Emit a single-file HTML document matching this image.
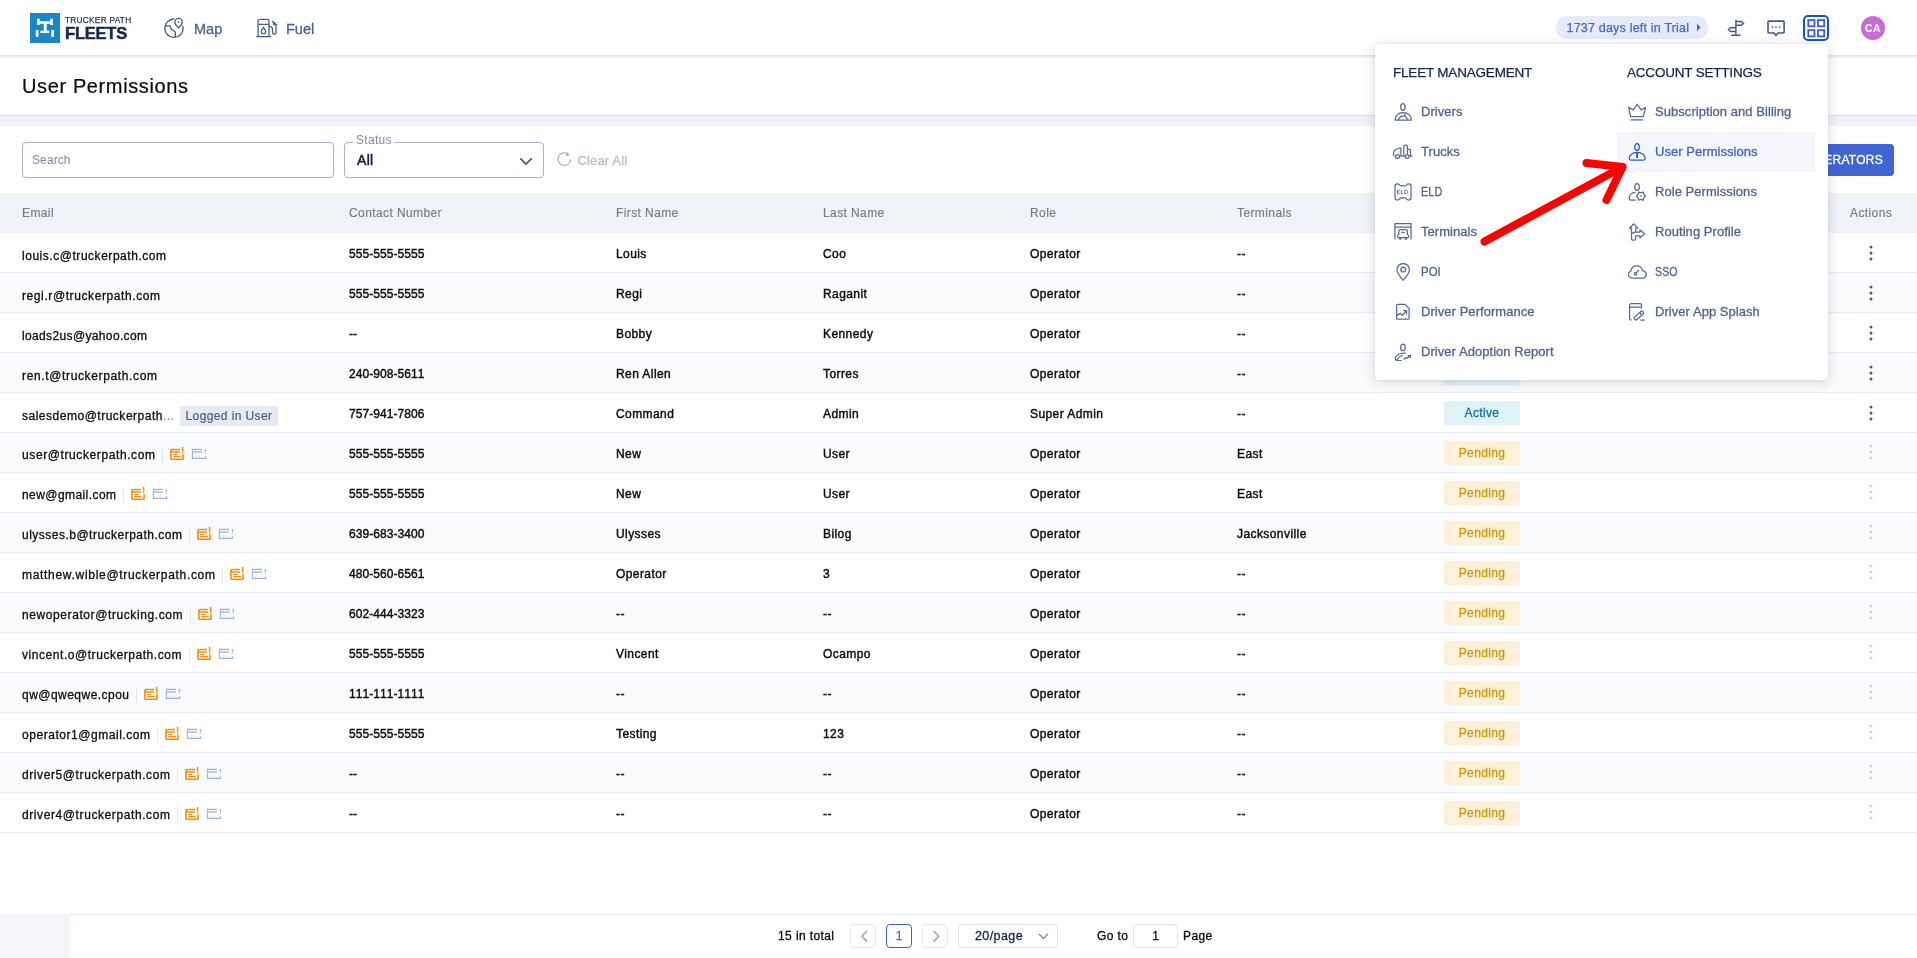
<!DOCTYPE html>
<html lang="en">
<head>
<meta charset="utf-8">
<title>User Permissions</title>
<style>
*{box-sizing:border-box;margin:0;padding:0}
html,body{width:1917px;height:958px;overflow:hidden;background:#fff}
body{will-change:transform;font-family:"Liberation Sans",sans-serif;font-size:12px;color:#111;position:relative}
.abs{position:absolute}
svg{display:block;overflow:visible}
/* header */
#hdr{position:absolute;left:0;top:0;width:1917px;height:56px;background:#fff;border-bottom:1px solid #e3e6ef;box-shadow:0 1px 2.5px rgba(0,0,0,.11)}
#logo{position:absolute;left:30px;top:13px;width:30px;height:30px;background:#1a87ca}
.tp{position:absolute;left:65px;top:16px;font-size:8.2px;line-height:10px;color:#1f3a63;letter-spacing:.33px;-webkit-text-stroke:.25px #1f3a63;white-space:nowrap}
.fl{position:absolute;left:65px;top:24px;font-size:16.5px;line-height:18px;font-weight:bold;color:#14294d;letter-spacing:-.2px;-webkit-text-stroke:.5px #14294d;white-space:nowrap}
.nav{position:absolute;top:20px;font-size:14.5px;line-height:18px;color:#4d5f8f;-webkit-text-stroke:.3px #4d5f8f;white-space:nowrap}
/* title */
#ttl{position:absolute;left:22px;top:73px;font-size:20px;line-height:26px;color:#0a0a0a;-webkit-text-stroke:.2px #0a0a0a;white-space:nowrap;letter-spacing:.62px}
#tline{position:absolute;left:0;top:115px;width:1917px;height:1px;background:#d9dde8}
#band{position:absolute;left:0;top:116px;width:1917px;height:10px;background:#f0f2f7}
/* filters */
#srch{position:absolute;left:22px;top:142px;width:312px;height:36px;border:1px solid #aab3ca;border-radius:4px;background:#fff}
#srch span{position:absolute;left:9px;top:10px;line-height:14px;font-size:12px;color:#7f88a0;letter-spacing:.1px}
#sel{position:absolute;left:344px;top:142px;width:200px;height:36px;border:1px solid #aab3ca;border-radius:4px;background:#fff}
#sel .lb{position:absolute;left:8px;top:-10px;padding:0 2px 0 3px;background:#fff;font-size:12px;line-height:14px;color:#7f88a0;letter-spacing:.3px}
#sel .v{position:absolute;left:12px;top:8px;font-size:14px;line-height:18px;color:#0f1b3d;-webkit-text-stroke:.45px #0f1b3d;letter-spacing:.3px}
#clr{position:absolute;left:577.5px;top:153px;font-size:13px;line-height:16px;color:#b9bfcd;-webkit-text-stroke:.35px #b9bfcd;letter-spacing:.15px;white-space:nowrap}
#btn{position:absolute;left:1760px;top:144px;width:134px;height:32px;border-radius:4px;background:#4064d2;color:#fff;font-size:12px;line-height:32px;text-align:right;padding-right:11px;-webkit-text-stroke:.3px #fff;letter-spacing:.25px;white-space:nowrap}
/* table */
#th{position:absolute;left:0;top:193px;width:1917px;height:40px;background:#f0f3f8}
#th span{position:absolute;top:13px;line-height:14px;font-size:12px;color:#757e96;-webkit-text-stroke:.2px #757e96;letter-spacing:.4px;white-space:nowrap}
.row{position:absolute;left:0;width:1917px;height:40px;border-bottom:1px solid #e8ebf3;background:#fff}
.row.alt{background:#fafbfd}
.c{position:absolute;top:14px;line-height:14px;font-size:12px;color:#0d0d0d;-webkit-text-stroke:.42px #0d0d0d;white-space:nowrap;letter-spacing:.42px}
.c.em{left:22px;top:16px;-webkit-text-stroke:.3px #0d0d0d;letter-spacing:.56px;overflow:visible}
.c.ph{letter-spacing:.07px;font-kerning:none}
.c.em.k1{top:15px}
.dv{position:absolute;top:15px;width:1px;height:15px;background:#e3e6ee}
.ic{position:absolute;top:14px}
.lg{position:absolute;left:180px;top:13px;width:98px;height:20px;border-radius:3px;background:#e6eaf5;color:#4f5a7b;-webkit-text-stroke:.2px #4f5a7b;font-size:12px;line-height:20px;text-align:center;letter-spacing:.4px;white-space:nowrap}
.bd{position:absolute;left:1444px;top:8px;width:76px;height:24px;border-radius:2px;font-size:12px;line-height:25px;text-align:center;letter-spacing:.35px}
.bd.ac{background:#e0f3f7;color:#0e6fa9;-webkit-text-stroke:.3px #0e6fa9}
.bd.pe{background:#fff0d9;color:#d6960c;-webkit-text-stroke:.3px #d6960c}
.dots{position:absolute;left:1868.9px;top:12px;color:#535a79}
.dots.lt{color:#d0d3de;top:11.4px;left:1868.5px}
/* footer */
#ft{position:absolute;left:0;top:914px;width:1917px;height:44px;background:#fff;border-top:1px solid #e3e6f5}
#ftg{position:absolute;left:0;top:914px;width:70px;height:44px;background:#f4f6fa}
.pt{position:absolute;top:929px;line-height:14px;font-size:12px;color:#0d0d0d;-webkit-text-stroke:.3px #0d0d0d;letter-spacing:.4px;white-space:nowrap}
.pb{position:absolute;top:924px;height:24px;border:1px solid #e4e7f0;border-radius:4px;background:#fff}
/* dropdown */
#dd{position:absolute;left:1374.5px;top:44px;width:453px;height:336px;background:#fff;border-radius:4px;box-shadow:0 2px 12px rgba(45,50,75,.2),0 0 1px rgba(45,50,75,.22)}
.dh{position:absolute;top:19.5px;font-size:13.5px;line-height:18px;color:#14244a;-webkit-text-stroke:.25px #14244a;letter-spacing:-.2px;white-space:nowrap}
.mi{position:absolute;height:40px;font-size:13px;line-height:41.4px;color:#50618f;-webkit-text-stroke:.28px #50618f;white-space:nowrap;letter-spacing:.05px}
.mi svg{position:absolute;left:-27px;top:12px;fill:none;stroke:currentColor;stroke-width:1.25;color:#586996}
.mi.on svg{color:#3157d0}
.sx{display:inline-block;transform-origin:0 50%}
.mi.on{color:#3f62d3;-webkit-text-stroke:.3px #3f62d3}
#hl{position:absolute;left:242.5px;top:88px;width:198px;height:39.5px;background:#f4f6fb}
</style>
</head>
<body>
<svg width="0" height="0" style="position:absolute">
<defs>
<symbol id="i-or" viewBox="0 0 15 14"><path d="M10 2.5H1.7A.8 .8 0 0 0 .9 3.3V11.4A.8 .8 0 0 0 1.7 12.2H12.3A.8 .8 0 0 0 13.1 11.4V7.3M.9 5H10" fill="none" stroke="#fb8a0c" stroke-width="1.6"/><path d="M3.1 7.5H7.3M3.1 9.5H10.8" fill="none" stroke="#fb8a0c" stroke-width="1.1"/><path d="M12.6 .5V3.9" stroke="#fb8a0c" stroke-width="1.5" stroke-linecap="round" fill="none"/><circle cx="12.6" cy="5.5" r=".7" fill="#fb8a0c"/></symbol>
<symbol id="i-bl" viewBox="0 0 16 14"><path d="M10.9 2.4H1.4V11.4H14.6V9.2" fill="none" stroke="#9db0d8" stroke-width="1.1"/><path d="M1.4 5H10.9" stroke="#b0c0e1" stroke-width="1.6" fill="none"/><path d="M4.4 9.1H5.6M7.8 9.1H9" stroke="#c5d0ea" stroke-width="1.2" fill="none"/><path d="M14.4 2V5M14.4 6.1V6.8" stroke="#9db0d8" stroke-width="1.2" fill="none"/></symbol>

<symbol id="m-drv" viewBox="0 0 18 18"><ellipse cx="8.9" cy="4" rx="2.2" ry="3.3"/><path d="M1.3 17.2C1 13 4 9.7 9.2 9.7C14.5 9.7 17.6 13 17.2 17.2Z"/><path d="M4.2 17C5.5 13.8 8.3 12.9 10 12.9C11 12.7 11.4 11.2 11.3 10.2M13.9 17C12.8 14.6 11.5 13.4 10 12.9"/></symbol>
<symbol id="m-trk" viewBox="0 0 20 18"><path d="M.6 12.8V9.5C.6 7.5 4 5.1 6.5 5.1H7.9V13M1.5 13.1H19.5M10.8 13V3.2A1 1 0 0 1 11.8 2.2H13.4A1 1 0 0 1 14.4 3.2V13M14.4 6.3H16.5A1 1 0 0 1 17.5 7.3V13"/><circle cx="4.5" cy="13.4" r="1.9" fill="#fff"/><circle cx="14.2" cy="13.4" r="1.9" fill="#fff"/></symbol>
<symbol id="m-eld" viewBox="0 0 18 18"><path d="M1 3.2C1 1.7 2 .8 3.3 .8C4.6 .8 5.2 1.4 5.6 2C6 2.6 6.4 2.9 7.2 2.9H10.8C11.6 2.9 12 2.6 12.4 2C12.8 1.4 13.4 .8 14.7 .8C16 .8 17 1.7 17 3.2V14.6C17 16.1 16 17 14.7 17C13.4 17 12.8 16.4 12.4 15.8C12 15.2 11.6 14.9 10.8 14.9H7.200000000000001C6.4 14.9 6 15.2 5.6 15.8C5.2 16.4 4.6 17 3.3 17C2 17 1 16.1 1 14.6Z"/><path d="M5.6 7.2H3.6V10.6H5.6M3.6 8.9H5.2M7.3 7V10.6H9.1M10.7 7.2V10.6H11.6C12.9 10.6 13.6 9.9 13.6 8.9C13.6 7.9 12.9 7.2 11.6 7.2Z" stroke-width=".9"/></symbol>
<symbol id="m-ter" viewBox="0 0 18 18"><path d="M.9 16.6V.7H17V16.6M.9 4H17M4.8 11.5V8.2A1.5 1.5 0 0 1 6.3 6.7H11.9A1.5 1.5 0 0 1 13.4 8.2V11.5C14.2 11.6 14.6 12.2 14.6 13V13.5A1 1 0 0 1 13.6 14.5H4.6A1 1 0 0 1 3.6 13.5V13C3.600000000000001 12.2 4 11.6 4.8 11.5ZM7.3 9.4H10.8"/><path d="M5.2 15.9H7.4M10.8 15.9H13" stroke-width="1.7"/></symbol>
<symbol id="m-poi" viewBox="0 0 18 18"><path d="M9.2 17.2C6 13.5 3 10.5 3 6.7A6.2 6.2 0 0 1 15.4 6.7C15.4 10.5 12.4 13.5 9.2 17.2Z"/><circle cx="9.2" cy="6.6" r="2.4"/></symbol>
<symbol id="m-prf" viewBox="0 0 18 18"><path d="M2.6 2.6A1.3 1.3 0 0 1 3.9 1.3H10.8L15.1 5.4V14.9A1.3 1.3 0 0 1 13.8 16.2H3.9A1.3 1.3 0 0 1 2.6 14.9ZM2.6 12.6L6.2 10.4L8.3 12.4L12.3 7.8M9.3 7.6H12.5V11.5"/></symbol>
<symbol id="m-adp" viewBox="0 0 18 18"><ellipse cx="9" cy="4.4" rx="2.3" ry="3.3"/><path d="M11.7 10.2C6 9.6 1.2 12.5 1.2 15.8C1.2 17.2 2.5 17.5 4 17.5H7.7M3.2 17C4 14.5 6 12.8 9 12.5M9.6 16.6L12.2 14.4L13.2 15.2L16.2 12.9M13.6 12.5H16.4V15"/></symbol>
<symbol id="m-sub" viewBox="0 0 18 18"><path d="M.6 4.4L5.2 6.9L9.2 1.3L13.2 6.9L17.7 4.4L15.1 13.6H2.6ZM2.6 16.8H15.3"/></symbol>
<symbol id="m-usr" viewBox="0 0 18 18"><ellipse cx="9" cy="3.9" rx="2.3" ry="3.4"/><path d="M1.2 15.5C1.2 12 4.5 9.4 9.2 9.4C14 9.4 17.2 12 17.2 15.5C17.2 16.5 16.5 17 15.5 17H3C2 17 1.2 16.5 1.2 15.5Z"/><path d="M9.1 9.8V14.3" stroke-width="1.9" stroke-linecap="round"/></symbol>
<symbol id="m-rol" viewBox="0 0 18 18"><ellipse cx="9" cy="3.9" rx="2.3" ry="3.4"/><path d="M7.4 9.4C3.5 9.6 1.2 12.2 1.2 15.3C1.2 16.6 2 17.2 3.2 17.2H7.7"/><path d="M17.70 13.10L15.86 14.75L15.35 17.17L13.00 16.40L10.65 17.17L10.14 14.75L8.30 13.10L10.14 11.45L10.65 9.03L13.00 9.80L15.35 9.03L15.86 11.45Z" stroke-linejoin="round"/><circle cx="13" cy="13.1" r=".8" fill="currentColor" stroke="none"/></symbol>
<symbol id="m-rte" viewBox="0 0 18 18"><path d="M5.8 .8L1.5 5.2H3.5V15.7A1.5 1.5 0 0 0 5 17.2H6.2A1.5 1.5 0 0 0 7.7 15.7V12.8H12V14.9L16.6 10.8L12 6.9V9H7.7V5.2H9.7ZM3.6 11C4.5 9.3 6 9 7.7 9" stroke-linejoin="round"/></symbol>
<symbol id="m-sso" viewBox="0 0 19 18"><path d="M4.500000000000001 15C2 15 .3 13.6 .3 11.8C.3 10 1.4 8.9 2.8 8.3C3.2 5.2 5.5 2.9 8.6 2.9C11.6 2.9 13.8 4.8 14.5 7.6C16.6 8 18.2 9.5 18.2 11.6C18.2 13.6 16.6 15 14.8 15Z"/><circle cx="7.5" cy="10.7" r="1.3"/><path d="M8.5 9.7L10.9 7"/></symbol>
<symbol id="m-spl" viewBox="0 0 18 18"><path d="M3.7 16.9H3.1A1.5 1.5 0 0 1 1.6 15.4V2.2A1.5 1.5 0 0 1 3.1 .7H12A1.5 1.5 0 0 1 13.5 2.2V5.4M1.6 4H13.5M12.3 17H16.8"/><g transform="translate(10.8 12.6) rotate(-41)"><rect x="-5.6" y="-1.7" width="11.2" height="3.4" rx="1.7"/><path d="M2.6 -1.7V1.7"/></g></symbol>
<symbol id="i-dt" viewBox="0 0 4 16"><circle cx="2" cy="2" r="1.5"/><circle cx="2" cy="8" r="1.5"/><circle cx="2" cy="14" r="1.5"/></symbol>
</defs>
</svg>

<!-- table -->
<div id="th"><span style="left:22px">Email</span><span style="left:349px">Contact Number</span><span style="left:616px">First Name</span><span style="left:823px">Last Name</span><span style="left:1030px">Role</span><span style="left:1237px">Terminals</span><span style="left:1444px">Status</span><span style="left:1850px">Actions</span></div>
<div class="row" style="top:233px"><span class="c em" style="width:144px;letter-spacing:0.535px">louis.c@truckerpath.com</span><span class="c ph" style="left:349px">555-555-5555</span><span class="c" style="left:616px">Louis</span><span class="c" style="left:823px">Coo</span><span class="c" style="left:1030px">Operator</span><span class="c" style="left:1237px">--</span><span class="bd ac">Active</span><svg class="dots" width="4" height="16" fill="currentColor"><use href="#i-dt"/></svg></div>
<div class="row alt" style="top:273px"><span class="c em" style="width:138px;letter-spacing:0.592px">regi.r@truckerpath.com</span><span class="c ph" style="left:349px">555-555-5555</span><span class="c" style="left:616px">Regi</span><span class="c" style="left:823px">Raganit</span><span class="c" style="left:1030px">Operator</span><span class="c" style="left:1237px">--</span><span class="bd ac">Active</span><svg class="dots" width="4" height="16" fill="currentColor"><use href="#i-dt"/></svg></div>
<div class="row" style="top:313px"><span class="c em" style="width:125px;letter-spacing:0.358px">loads2us@yahoo.com</span><span class="c ph" style="left:349px">--</span><span class="c" style="left:616px">Bobby</span><span class="c" style="left:823px">Kennedy</span><span class="c" style="left:1030px">Operator</span><span class="c" style="left:1237px">--</span><span class="bd ac">Active</span><svg class="dots" width="4" height="16" fill="currentColor"><use href="#i-dt"/></svg></div>
<div class="row alt" style="top:353px"><span class="c em" style="width:135px;letter-spacing:0.638px">ren.t@truckerpath.com</span><span class="c ph" style="left:349px">240-908-5611</span><span class="c" style="left:616px">Ren Allen</span><span class="c" style="left:823px">Torres</span><span class="c" style="left:1030px">Operator</span><span class="c" style="left:1237px">--</span><span class="bd ac">Active</span><svg class="dots" width="4" height="16" fill="currentColor"><use href="#i-dt"/></svg></div>
<div class="row" style="top:393px"><span class="c em" style="width:152px;letter-spacing:0.511px">salesdemo@truckerpath<span style="color:#777;-webkit-text-stroke:0">...</span></span><span class="lg">Logged in User</span><span class="c ph" style="left:349px">757-941-7806</span><span class="c" style="left:616px">Command</span><span class="c" style="left:823px">Admin</span><span class="c" style="left:1030px">Super Admin</span><span class="c" style="left:1237px">--</span><span class="bd ac">Active</span><svg class="dots" width="4" height="16" fill="currentColor"><use href="#i-dt"/></svg></div>
<div class="row alt" style="top:433px"><span class="c em k1" style="width:133px;letter-spacing:0.602px">user@truckerpath.com</span><i class="dv" style="left:162px"></i><svg class="ic" style="left:170px" width="15" height="14"><use href="#i-or"/></svg><svg class="ic" style="left:191px" width="16" height="14"><use href="#i-bl"/></svg><span class="c ph" style="left:349px">555-555-5555</span><span class="c" style="left:616px">New</span><span class="c" style="left:823px">User</span><span class="c" style="left:1030px">Operator</span><span class="c" style="left:1237px">East</span><span class="bd pe">Pending</span><svg class="dots lt" width="4" height="16" fill="currentColor"><use href="#i-dt"/></svg></div>
<div class="row" style="top:473px"><span class="c em k1" style="width:94px;letter-spacing:0.427px">new@gmail.com</span><i class="dv" style="left:123px"></i><svg class="ic" style="left:131px" width="15" height="14"><use href="#i-or"/></svg><svg class="ic" style="left:152px" width="16" height="14"><use href="#i-bl"/></svg><span class="c ph" style="left:349px">555-555-5555</span><span class="c" style="left:616px">New</span><span class="c" style="left:823px">User</span><span class="c" style="left:1030px">Operator</span><span class="c" style="left:1237px">East</span><span class="bd pe">Pending</span><svg class="dots lt" width="4" height="16" fill="currentColor"><use href="#i-dt"/></svg></div>
<div class="row alt" style="top:513px"><span class="c em k1" style="width:160px;letter-spacing:0.49px">ulysses.b@truckerpath.com</span><i class="dv" style="left:189px"></i><svg class="ic" style="left:197px" width="15" height="14"><use href="#i-or"/></svg><svg class="ic" style="left:218px" width="16" height="14"><use href="#i-bl"/></svg><span class="c ph" style="left:349px">639-683-3400</span><span class="c" style="left:616px">Ulysses</span><span class="c" style="left:823px">Bilog</span><span class="c" style="left:1030px">Operator</span><span class="c" style="left:1237px">Jacksonville</span><span class="bd pe">Pending</span><svg class="dots lt" width="4" height="16" fill="currentColor"><use href="#i-dt"/></svg></div>
<div class="row" style="top:553px"><span class="c em k1" style="width:193px;letter-spacing:0.693px">matthew.wible@truckerpath.com</span><i class="dv" style="left:222px"></i><svg class="ic" style="left:230px" width="15" height="14"><use href="#i-or"/></svg><svg class="ic" style="left:251px" width="16" height="14"><use href="#i-bl"/></svg><span class="c ph" style="left:349px">480-560-6561</span><span class="c" style="left:616px">Operator</span><span class="c" style="left:823px">3</span><span class="c" style="left:1030px">Operator</span><span class="c" style="left:1237px">--</span><span class="bd pe">Pending</span><svg class="dots lt" width="4" height="16" fill="currentColor"><use href="#i-dt"/></svg></div>
<div class="row alt" style="top:593px"><span class="c em k1" style="width:160.5px;letter-spacing:0.59px">newoperator@trucking.com</span><i class="dv" style="left:189.5px"></i><svg class="ic" style="left:197.5px" width="15" height="14"><use href="#i-or"/></svg><svg class="ic" style="left:218.5px" width="16" height="14"><use href="#i-bl"/></svg><span class="c ph" style="left:349px">602-444-3323</span><span class="c" style="left:616px">--</span><span class="c" style="left:823px">--</span><span class="c" style="left:1030px">Operator</span><span class="c" style="left:1237px">--</span><span class="bd pe">Pending</span><svg class="dots lt" width="4" height="16" fill="currentColor"><use href="#i-dt"/></svg></div>
<div class="row" style="top:633px"><span class="c em k1" style="width:159.5px;letter-spacing:0.552px">vincent.o@truckerpath.com</span><i class="dv" style="left:188.5px"></i><svg class="ic" style="left:196.5px" width="15" height="14"><use href="#i-or"/></svg><svg class="ic" style="left:217.5px" width="16" height="14"><use href="#i-bl"/></svg><span class="c ph" style="left:349px">555-555-5555</span><span class="c" style="left:616px">Vincent</span><span class="c" style="left:823px">Ocampo</span><span class="c" style="left:1030px">Operator</span><span class="c" style="left:1237px">--</span><span class="bd pe">Pending</span><svg class="dots lt" width="4" height="16" fill="currentColor"><use href="#i-dt"/></svg></div>
<div class="row alt" style="top:673px"><span class="c em k1" style="width:107px;letter-spacing:0.469px">qw@qweqwe.cpou</span><i class="dv" style="left:136px"></i><svg class="ic" style="left:144px" width="15" height="14"><use href="#i-or"/></svg><svg class="ic" style="left:165px" width="16" height="14"><use href="#i-bl"/></svg><span class="c ph" style="left:349px">111-111-1111</span><span class="c" style="left:616px">--</span><span class="c" style="left:823px">--</span><span class="c" style="left:1030px">Operator</span><span class="c" style="left:1237px">--</span><span class="bd pe">Pending</span><svg class="dots lt" width="4" height="16" fill="currentColor"><use href="#i-dt"/></svg></div>
<div class="row" style="top:713px"><span class="c em k1" style="width:128px;letter-spacing:0.543px">operator1@gmail.com</span><i class="dv" style="left:157px"></i><svg class="ic" style="left:165px" width="15" height="14"><use href="#i-or"/></svg><svg class="ic" style="left:186px" width="16" height="14"><use href="#i-bl"/></svg><span class="c ph" style="left:349px">555-555-5555</span><span class="c" style="left:616px">Testing</span><span class="c" style="left:823px">123</span><span class="c" style="left:1030px">Operator</span><span class="c" style="left:1237px">--</span><span class="bd pe">Pending</span><svg class="dots lt" width="4" height="16" fill="currentColor"><use href="#i-dt"/></svg></div>
<div class="row alt" style="top:753px"><span class="c em k1" style="width:148px;letter-spacing:0.595px">driver5@truckerpath.com</span><i class="dv" style="left:177px"></i><svg class="ic" style="left:185px" width="15" height="14"><use href="#i-or"/></svg><svg class="ic" style="left:206px" width="16" height="14"><use href="#i-bl"/></svg><span class="c ph" style="left:349px">--</span><span class="c" style="left:616px">--</span><span class="c" style="left:823px">--</span><span class="c" style="left:1030px">Operator</span><span class="c" style="left:1237px">--</span><span class="bd pe">Pending</span><svg class="dots lt" width="4" height="16" fill="currentColor"><use href="#i-dt"/></svg></div>
<div class="row" style="top:793px"><span class="c em k1" style="width:148px;letter-spacing:0.595px">driver4@truckerpath.com</span><i class="dv" style="left:177px"></i><svg class="ic" style="left:185px" width="15" height="14"><use href="#i-or"/></svg><svg class="ic" style="left:206px" width="16" height="14"><use href="#i-bl"/></svg><span class="c ph" style="left:349px">--</span><span class="c" style="left:616px">--</span><span class="c" style="left:823px">--</span><span class="c" style="left:1030px">Operator</span><span class="c" style="left:1237px">--</span><span class="bd pe">Pending</span><svg class="dots lt" width="4" height="16" fill="currentColor"><use href="#i-dt"/></svg></div>

<!-- title + filters -->
<div id="ttl">User Permissions</div>
<div id="tline"></div><div id="band"></div>
<div id="srch"><span>Search</span></div>
<div id="sel"><span class="lb">Status</span><span class="v">All</span>
<svg class="abs" style="left:174px;top:14px" width="14" height="9"><path d="M1.3 1.3L7 7L12.7 1.3" fill="none" stroke="#4a5573" stroke-width="1.7"/></svg></div>
<svg class="abs" style="left:556px;top:151px" width="17" height="17"><path d="M12.9 3.9A6.3 6.3 0 1 0 14.6 8.2" fill="none" stroke="#b4bac9" stroke-width="1.4"/><path d="M10.9 .7L13.8 4.4L9.6 5.3Z" fill="#b4bac9"/></svg>
<div id="clr">Clear All</div>
<div id="btn">ADD OPERATORS</div>

<!-- footer -->
<div id="ft"></div><div id="ftg"></div>
<span class="pt" style="left:778px">15 in total</span>
<div class="pb" style="left:850px;width:26px"><svg class="abs" style="left:8.5px;top:5px" width="9" height="13"><path d="M7 .8L1.9 6.2L7 11.6" fill="none" stroke="#a9afc0" stroke-width="1.9"/></svg></div>
<div class="pb" style="left:886px;width:26px;border:1.5px solid #3f62d3;color:#4a6cd4;-webkit-text-stroke:.3px #4a6cd4;text-align:center;line-height:22px;font-size:12px">1</div>
<div class="pb" style="left:922px;width:26px"><svg class="abs" style="left:8.5px;top:5px" width="9" height="13"><path d="M1.6 .8L6.7 6.2L1.6 11.6" fill="none" stroke="#a9afc0" stroke-width="1.9"/></svg></div>
<div class="pb" style="left:958px;width:100px;border-color:#dfe3ee"><span class="abs" style="left:16px;top:4px;line-height:14px;font-size:12.5px;color:#14204a;-webkit-text-stroke:.3px #14204a;letter-spacing:.4px">20/page</span><svg class="abs" style="left:79px;top:8px" width="11" height="7"><path d="M1 1L5.5 5.5L10 1" fill="none" stroke="#7d869e" stroke-width="1.4"/></svg></div>
<span class="pt" style="left:1097px">Go to</span>
<div class="pb" style="left:1133px;width:45px;border-color:#dfe3ee;text-align:center;line-height:23px;font-size:12px;color:#0d0d0d;-webkit-text-stroke:.3px #0d0d0d">1</div>
<span class="pt" style="left:1183px">Page</span>

<!-- header -->
<div id="hdr">
<div id="logo"><svg width="30" height="30"><path d="M7.1 5.75h2.7v2.5h10.4v-2.5h2.7v6.25h-2.7v-1.25h-3.5v7.05h2.5v2.2h-8.8v-2.2h3.35v-7.05h-3.95v1.25h-2.7ZM5.8 17h2.7v7.1h-2.7ZM21.3 17h2.7v7.1h-2.7Z" fill="#fff"/></svg></div>
<div class="tp">TRUCKER PATH</div><div class="fl">FLEETS</div>

<svg class="abs" style="left:164px;top:18px" width="20" height="20" fill="none" stroke="#43568a" stroke-width="1.3"><circle cx="10" cy="10.2" r="9.2"/><path d="M1.2 7.8H6.2C6.2 10 7 11.2 8.5 12C10.5 13 11.5 13.2 11.4 15V19.2"/><path d="M14.5 9.9C12 7.5 10.8 5.8 10.8 4A3.7 3.7 0 0 1 18.2 4C18.2 5.8 17 7.5 14.5 9.9Z" fill="#fff" stroke="#fff" stroke-width="3.2"/><path d="M14.5 9.9C12 7.5 10.8 5.8 10.8 4A3.7 3.7 0 0 1 18.2 4C18.2 5.8 17 7.5 14.5 9.9Z" fill="#fff"/><circle cx="14.5" cy="4.1" r=".9" fill="#43568a" stroke="none"/></svg>
<svg class="abs" style="left:256px;top:18px" width="21" height="20" fill="none" stroke="#4a5d8c" stroke-width="1.3"><path d="M2.1 18.7V2.9A1.5 1.5 0 0 1 3.6 1.4H11.5A1.5 1.5 0 0 1 13 2.900000000000001V18.7M2.1 6.4H13M.1 18.7H15M7.5 9.4C8.6 11 9.7 12.2 9.7 13.5A2.2 2.2 0 0 1 5.3 13.5C5.3 12.2 6.4 11 7.5 9.4ZM13 8.5C15 8 16.5 9.5 16.5 11.5V14.5A1.75 1.75 0 0 0 20 14.5V6.5L16.3 3.3"/><path d="M17.3 4.2L20 6.5L17.8 6.6Z" fill="#4a5d8c"/></svg>
<div class="abs" style="left:1556px;top:16px;width:152px;height:23px;border-radius:12px;background:#e6ebfa"></div>
<div class="abs" id="trial" style="left:1566.5px;top:20px;font-size:12.5px;line-height:16px;color:#4565d4;-webkit-text-stroke:.25px #4565d4;letter-spacing:.2px;white-space:nowrap">1737 days left in Trial</div>
<svg class="abs" style="left:1696px;top:23px" width="6" height="9"><path d="M1 .8L4.6 4.5L1 8.2Z" fill="#4565d4"/></svg>
<svg class="abs" style="left:1727px;top:19px" width="18" height="18" fill="none" stroke="#45568a" stroke-width="1.4"><path d="M8.9 1V16.2M8.9 2.5H14.4L16.5 4.5L14.4 6.3H8.9M8.9 8.7H3.4L1.4 10.6L3.4 12.5H8.9M4.3 16.2H13.6"/></svg>
<svg class="abs" style="left:1767px;top:19px" width="18" height="18" fill="none" stroke="#45568a" stroke-width="1.6"><path d="M2 2.1H16.1A1 1 0 0 1 17.1 3.1V13A1 1 0 0 1 16.1 14H11L9 16.3L7 14H2A1 1 0 0 1 1 13V3.1A1 1 0 0 1 2 2.1Z"/><g fill="#45568a" stroke="none"><circle cx="5.3" cy="8.1" r=".9"/><circle cx="9" cy="8.1" r=".9"/><circle cx="12.7" cy="8.1" r=".9"/></g></svg>
<div class="abs" style="left:1803px;top:15px;width:26px;height:26px;border:2px solid #0d55c8;border-radius:5px"></div>
<svg class="abs" style="left:1807px;top:19px" width="18" height="18" fill="none" stroke="#3b5bcf" stroke-width="1.8"><rect x="1.3" y="1.1" width="6.2" height="6.2"/><rect x="11" y="1.1" width="6.2" height="6.2"/><rect x="1.3" y="11.2" width="6.2" height="6.2"/><rect x="11" y="11.2" width="6.2" height="6.2"/></svg>
<div class="abs" style="left:1861px;top:16px;width:24px;height:24px;border-radius:50%;background:#c86dd8;color:#fff;font-size:10.5px;font-weight:bold;line-height:24px;text-align:center;letter-spacing:.3px">CA</div>
<div class="nav" style="left:194px">Map</div>
<div class="nav" style="left:286px">Fuel</div>
</div>

<!-- dropdown -->
<div id="dd">
<div id="hl"></div>
<div class="dh" style="left:18.5px">FLEET MANAGEMENT</div>
<div class="dh" style="left:252.5px">ACCOUNT SETTINGS</div>
<div class="mi" style="left:46.5px;top:47px"><svg class="mic" width="18" height="18"><use href="#m-drv"/></svg>Drivers</div>
<div class="mi" style="left:46.5px;top:87px"><svg class="mic" width="20" height="18" style="left:-28px"><use href="#m-trk"/></svg>Trucks</div>
<div class="mi" style="left:46.5px;top:127px"><svg class="mic" width="18" height="18"><use href="#m-eld"/></svg><span class="sx" style="transform:scaleX(.84)">ELD</span></div>
<div class="mi" style="left:46.5px;top:167px"><svg class="mic" width="18" height="18"><use href="#m-ter"/></svg>Terminals</div>
<div class="mi" style="left:46.5px;top:207px"><svg class="mic" width="18" height="18"><use href="#m-poi"/></svg><span class="sx" style="transform:scaleX(.88)">POI</span></div>
<div class="mi" style="left:46.5px;top:247px"><svg class="mic" width="18" height="18"><use href="#m-prf"/></svg>Driver Performance</div>
<div class="mi" style="left:46.5px;top:287px"><svg class="mic" width="18" height="18"><use href="#m-adp"/></svg>Driver Adoption Report</div>
<div class="mi" style="left:280.5px;top:47px"><svg class="mic" width="18" height="18"><use href="#m-sub"/></svg>Subscription and Billing</div>
<div class="mi on" style="left:280.5px;top:87px"><svg class="mic" width="18" height="18"><use href="#m-usr"/></svg>User Permissions</div>
<div class="mi" style="left:280.5px;top:127px"><svg class="mic" width="18" height="18"><use href="#m-rol"/></svg>Role Permissions</div>
<div class="mi" style="left:280.5px;top:167px"><svg class="mic" width="18" height="18"><use href="#m-rte"/></svg>Routing Profile</div>
<div class="mi" style="left:280.5px;top:207px"><svg class="mic" width="19" height="18"><use href="#m-sso"/></svg><span class="sx" style="transform:scaleX(.82)">SSO</span></div>
<div class="mi" style="left:280.5px;top:247px"><svg class="mic" width="18" height="18"><use href="#m-spl"/></svg>Driver App Splash</div>
</div>

<!-- arrow -->
<svg class="abs" style="left:0;top:0" width="1917" height="958"><path d="M1484.5 241.5L1622.5 167M1586.5 163L1622.5 167L1606.5 200" fill="none" stroke="#fe0000" stroke-width="8" stroke-linecap="round" stroke-linejoin="round"/></svg>
</body>
</html>
